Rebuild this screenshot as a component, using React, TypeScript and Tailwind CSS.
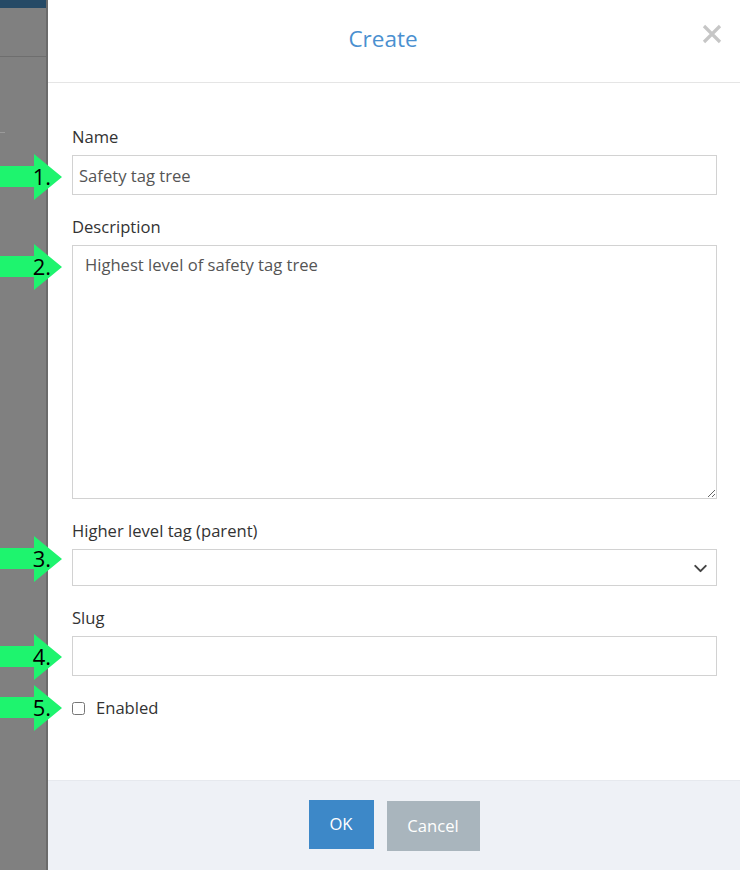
import { ChevronDown } from "lucide-react";

function Arrow({ top, n }: { top: number; n: string }) {
    return (
        <div className="absolute left-0 w-[63px] h-[46px]" style={{ top }}>
            <svg width="63" height="46" viewBox="0 0 63 46" className="absolute inset-0">
                <polygon points="0,12 34,12 34,0 62,23 34,46 34,33 0,33" fill="#1ef46e" />
            </svg>
            <span className="absolute right-[12px] top-[9px] text-[22px] leading-[26px] text-black">{n}</span>
        </div>
    );
}

function Label({ children }: { children: React.ReactNode }) {
    return <label className="block text-[16.6px] leading-[22px] text-[#333] mb-[7px]">{children}</label>;
}

export default function App() {
    return (
        <div className="relative flex w-[740px] h-[870px] overflow-hidden" style={{ fontFamily: '"Open Sans", "Noto Sans", sans-serif' }}>
            {/* page behind the modal */}
            <div className="relative w-[48px] shrink-0 bg-[#808080] border-r-2 border-[#6b6b6b]">
                <div className="h-[8px] bg-[#264a66]" />
                <div className="mt-[48px] h-px bg-[#6e6e6e]" />
                <div className="mt-[75px] w-[5px] h-px bg-[#9a9a9a]" />
            </div>

            {/* modal */}
            <div className="flex-1 flex flex-col bg-white">
                <div className="relative h-[83px] border-b border-[#e5e5e5] flex items-center justify-center pr-[22px] shrink-0">
                    <h1 className="text-[22.5px] text-[#4a90d0] -mt-[4px]">Create</h1>
                    <svg width="20" height="20" viewBox="0 0 20 20" className="absolute right-[18px] top-[24px]">
                        <path d="M2 2 L18 18 M18 2 L2 18" stroke="#c6c6c6" strokeWidth="3.2" />
                    </svg>
                </div>

                <div className="flex-1 pt-[43px] pl-[24px] pr-[23px]">
                    <Label>Name</Label>
                    <input
                        type="text"
                        defaultValue="Safety tag tree"
                        className="block w-full h-[40px] border border-[#d2d2d2] px-[6px] text-[16.6px] text-[#555] outline-none"
                    />

                    <div className="mt-[21px]">
                        <Label>Description</Label>
                        <textarea
                            defaultValue="Highest level of safety tag tree"
                            className="block w-full h-[254px] border border-[#d2d2d2] px-[12px] py-[8px] text-[16.6px] leading-[22px] text-[#555] outline-none resize-y"
                        />
                    </div>

                    <div className="mt-[21px]">
                        <Label>Higher level tag (parent)</Label>
                        <div className="relative h-[37px] border border-[#d2d2d2]">
                            <ChevronDown className="absolute right-[5px] top-[8px] w-[21px] h-[21px] text-[#444]" strokeWidth={2.3} />
                        </div>
                    </div>

                    <div className="mt-[21px]">
                        <Label>Slug</Label>
                        <input type="text" className="block w-full h-[40px] border border-[#d2d2d2] px-[6px] text-[16.6px] outline-none" />
                    </div>

                    <div className="mt-[21px] flex items-center h-[22px]">
                        <input type="checkbox" className="w-[13px] h-[13px] m-0" />
                        <span className="ml-[11px] text-[16.6px] text-[#333]">Enabled</span>
                    </div>
                </div>

                <div className="h-[90px] shrink-0 bg-[#eef1f6] border-t border-[#e6e9ee] flex items-start justify-center gap-[13px] pt-[19px]">
                    <button className="w-[65px] h-[49px] bg-[#3d88c8] text-white text-[16.6px]">OK</button>
                    <button className="w-[93px] h-[50px] mt-px bg-[#a9b5bd] text-white text-[16.6px]">Cancel</button>
                </div>
            </div>

            {/* annotation arrows */}
            <Arrow top={154} n="1." />
            <Arrow top={244} n="2." />
            <Arrow top={536} n="3." />
            <Arrow top={634} n="4." />
            <Arrow top={685} n="5." />
        </div>
    );
}
